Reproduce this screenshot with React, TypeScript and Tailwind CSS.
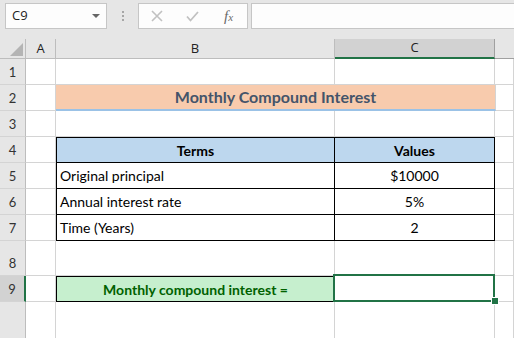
import React from 'react';

const cellFont = { fontFamily: 'Lato, "Open Sans", sans-serif' };

const rows = [
  { n: 1, h: 'h-[26px]' },
  { n: 2, h: 'h-[26px]' },
  { n: 3, h: 'h-[26px]' },
  { n: 4, h: 'h-[26px]' },
  { n: 5, h: 'h-[26px]' },
  { n: 6, h: 'h-[26px]' },
  { n: 7, h: 'h-[26px]' },
  { n: 8, h: 'h-[35px]' },
  { n: 9, h: 'h-[26px]' },
  { n: 10, h: 'h-[40px]' },
];

function RowHead({ n }: { n: number }) {
  const active = n === 9;
  return (
    <div
      className={`w-[26px] shrink-0 flex items-end justify-center pb-[2px] text-[13px] text-[#333] border-b border-[#d4d4d4] ${
        active ? 'bg-[#d2d2d2] border-r-2 border-r-[#217346]' : 'bg-[#e6e6e6] border-r border-r-[#bdbdbd]'
      }`}
    >
      {n === 10 ? '' : n}
    </div>
  );
}

function Cell({ cls = '', children }: { cls?: string; children?: React.ReactNode }) {
  return <div className={`shrink-0 flex items-center border-r border-b border-[#d4d4d4] ${cls}`}>{children}</div>;
}

export default function App() {
  return (
    <div className="w-[514px] h-[338px] overflow-hidden bg-white relative" style={{ fontFamily: '"Open Sans", sans-serif' }}>
      {/* formula bar */}
      <div className="h-[39px] bg-[#e6e6e6] flex items-start pt-[3px] pl-[5px]">
        <div className="w-[102px] h-[26px] bg-[#fdfdfd] border border-[#c6c6c6] flex items-center justify-between pl-[6px] pr-[6px]">
          <span className="text-[13px] text-[#222]">C9</span>
          <span className="w-0 h-0 border-l-[4px] border-r-[4px] border-t-[4px] border-l-transparent border-r-transparent border-t-[#666]" />
        </div>
        <div className="w-[31px] h-[26px] flex flex-col items-center justify-center gap-[2px]">
          <span className="w-[2px] h-[2px] bg-[#a6a6a6]" />
          <span className="w-[2px] h-[2px] bg-[#a6a6a6]" />
          <span className="w-[2px] h-[2px] bg-[#a6a6a6]" />
        </div>
        <div className="w-[110px] h-[26px] bg-[#fdfdfd] border border-[#c6c6c6] flex items-center pl-[12px]">
          <svg width="12" height="12" viewBox="0 0 12 12" className="mr-[23px]">
            <path d="M1 1L11 11M11 1L1 11" stroke="#c1c1c1" strokeWidth="1.6" />
          </svg>
          <svg width="13" height="11" viewBox="0 0 13 11" className="mr-[25px]">
            <path d="M1 5.5L4.5 9.5L12 1" stroke="#c1c1c1" strokeWidth="1.8" fill="none" />
          </svg>
          <span className="text-[15px] italic text-[#6a6a6a] leading-none" style={{ fontFamily: '"Liberation Serif", serif' }}>
            f<span className="text-[11px]">x</span>
          </span>
        </div>
        <div className="ml-[3px] flex-1 h-[26px] bg-[#fdfdfd] border border-[#c6c6c6] border-r-0" />
      </div>

      {/* column headers */}
      <div className="h-[20px] flex bg-[#e6e6e6] text-[13px] text-[#222]">
        <div className="w-[26px] shrink-0 border-r border-b border-[#bdbdbd] flex items-end justify-end pr-[2px] pb-[2px]">
          <svg width="13" height="13" viewBox="0 0 13 13">
            <path d="M13 0V13H0Z" fill="#b4b4b4" />
          </svg>
        </div>
        <div className="w-[30px] shrink-0 border-r border-b border-[#bdbdbd] flex items-center justify-center">A</div>
        <div className="w-[279px] shrink-0 border-r border-b border-[#bdbdbd] flex items-center justify-center">B</div>
        <div className="w-[160px] shrink-0 border-r border-r-[#a0a0a0] border-b-2 border-b-[#217346] bg-[#d2d2d2] flex items-center justify-center">C</div>
        <div className="flex-1 border-b border-[#a0a0a0]" />
      </div>

      {/* grid */}
      <div className="text-[14px] text-black" style={cellFont}>
        {rows.map((r) => (
          <div key={r.n} className={`flex ${r.h}`}>
            <RowHead n={r.n} />
            <Cell cls="w-[30px]" />
            {r.n === 2 ? (
              <div className="w-[440px] shrink-0 flex items-center justify-center bg-[#f8cbad] border-b-2 border-[#9bc2e6] border-r border-r-[#d4d4d4] text-[16px] font-bold text-[#44546a]">
                Monthly Compound Interest
              </div>
            ) : r.n === 4 ? (
              <>
                <Cell cls="w-[279px] justify-center font-bold bg-[#bdd7ee] !border-black border-l border-t">Terms</Cell>
                <Cell cls="w-[160px] justify-center font-bold bg-[#bdd7ee] !border-black border-t">Values</Cell>
              </>
            ) : r.n >= 5 && r.n <= 7 ? (
              <>
                <Cell cls="w-[279px] pl-[3px] !border-black border-l">
                  {r.n === 5 ? 'Original principal' : r.n === 6 ? 'Annual interest rate' : 'Time (Years)'}
                </Cell>
                <Cell cls="w-[160px] justify-center !border-black">{r.n === 5 ? '$10000' : r.n === 6 ? '5%' : '2'}</Cell>
              </>
            ) : r.n === 9 ? (
              <>
                <Cell cls="w-[279px] justify-center bg-[#c6efce] !border-black border-l border-t font-bold text-[#006100]">
                  Monthly compound interest =
                </Cell>
                <div className="w-[160px] shrink-0 relative border-b border-[#d4d4d4]">
                  <div className="absolute -left-[2px] -top-[2px] w-[162px] h-[28px] border-2 border-[#217346]" />
                  <div className="absolute right-[-4px] bottom-[-4px] w-[6px] h-[6px] bg-[#217346] border border-white box-content" />
                </div>
              </>
            ) : (
              <>
                <Cell cls="w-[279px]" />
                <Cell cls="w-[160px]" />
              </>
            )}
            <Cell cls="flex-1" />
          </div>
        ))}
      </div>
    </div>
  );
}
